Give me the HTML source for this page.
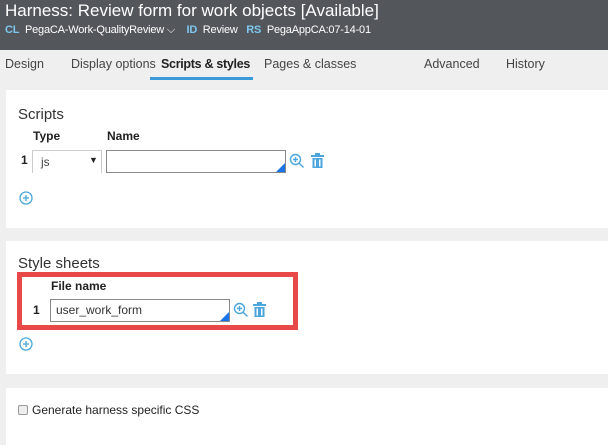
<!DOCTYPE html>
<html><head><meta charset="utf-8"><style>
*{box-sizing:border-box;margin:0;padding:0}
body{width:608px;height:445px;overflow:hidden;background:#efefef;font-family:"Liberation Sans",sans-serif;color:#222;position:relative}
.a{position:absolute;white-space:nowrap}
.hdr{position:absolute;left:0;top:0;width:608px;height:50px;background:#53565b}
.panel{position:absolute;left:6px;width:602px;background:#fff}
.inp{position:absolute;border:1px solid #8a8a8a;background:#fff;height:23px}
.inp:after{content:"";position:absolute;right:0;bottom:0;border-left:9px solid transparent;border-bottom:9px solid #1a73e8}
.t{font-size:12.5px;color:#444;top:57px}
</style></head><body>
<div class="hdr"></div>
<div class="a" style="left:5px;top:1px;font-size:17px;color:#fff">Harness: Review form for work objects [Available]</div>
<div class="a" style="left:5px;top:24px;font-size:11px;color:#fff;letter-spacing:-0.2px"><b style="color:#7ec8f0">CL</b>&nbsp; PegaCA-Work-QualityReview ⌵ &nbsp;&nbsp; <b style="color:#7ec8f0">ID</b>&nbsp; Review &nbsp;&nbsp;<b style="color:#7ec8f0">RS</b>&nbsp; PegaAppCA:07-14-01</div>
<div class="a t" style="left:5px">Design</div>
<div class="a t" style="left:71px">Display options</div>
<div class="a t" style="left:161px;font-weight:bold;color:#222;letter-spacing:-0.3px">Scripts &amp; styles</div>
<div class="a" style="left:150px;top:77px;width:103px;height:3px;background:#3a9ad9"></div>
<div class="a t" style="left:264px">Pages &amp; classes</div>
<div class="a t" style="left:424px">Advanced</div>
<div class="a t" style="left:506px">History</div>

<div class="panel" style="top:90px;height:138px"></div>
<div class="a" style="left:18px;top:106px;font-size:15px;color:#333">Scripts</div>
<div class="a" style="left:33px;top:129px;font-size:12px;font-weight:bold">Type</div>
<div class="a" style="left:107px;top:129px;font-size:12px;font-weight:bold">Name</div>
<div class="a" style="left:21px;top:153px;font-size:12px;font-weight:bold">1</div>
<div class="a" style="left:32px;top:150px;width:70px;height:23px;border:1px solid #ccc;border-bottom:none;background:#fff"></div>
<div class="a" style="left:41px;top:155px;font-size:12px;color:#444">js</div>
<div class="a" style="left:89px;top:155px;font-size:9px">▼</div>
<div class="inp" style="left:106px;top:150px;width:180px"></div>
<svg class="a" style="left:289px;top:153px" width="16" height="16" viewBox="0 0 16 16" fill="none" stroke="#4aa6dc" stroke-width="1.4"><circle cx="6.5" cy="6.5" r="5"/><path d="M4 6.5h5M6.5 4v5M10.2 10.2l4.3 4.3"/></svg>
<svg class="a" style="left:311px;top:153px" width="13" height="15" viewBox="0 0 13 15" fill="#4aa6dc"><rect x="0" y="2" width="13" height="2"/><rect x="4" y="0" width="5" height="2"/><path d="M1.5 5h10v10h-10z M3.5 6.5v7h1.5v-7z M8 6.5v7h1.5v-7z" fill-rule="evenodd"/></svg>
<svg class="a" style="left:19px;top:191px" width="14" height="14" viewBox="0 0 14 14" fill="none" stroke="#4aa6dc" stroke-width="1.3"><circle cx="7" cy="7" r="6"/><path d="M4 7h6M7 4v6"/></svg>

<div class="panel" style="top:241px;height:133px"></div>
<div class="a" style="left:18px;top:255px;font-size:15px;color:#333">Style sheets</div>
<div class="a" style="left:17px;top:272px;width:281px;height:58px;border:5px solid #e84848"></div>
<div class="a" style="left:51px;top:279px;font-size:12px;font-weight:bold">File name</div>
<div class="a" style="left:33px;top:303px;font-size:12px;font-weight:bold">1</div>
<div class="inp" style="left:50px;top:299px;width:180px"></div>
<div class="a" style="left:56px;top:303px;font-size:12px;color:#333">user_work_form</div>
<svg class="a" style="left:233px;top:302px" width="16" height="16" viewBox="0 0 16 16" fill="none" stroke="#4aa6dc" stroke-width="1.4"><circle cx="6.5" cy="6.5" r="5"/><path d="M4 6.5h5M6.5 4v5M10.2 10.2l4.3 4.3"/></svg>
<svg class="a" style="left:253px;top:302px" width="13" height="15" viewBox="0 0 13 15" fill="#4aa6dc"><rect x="0" y="2" width="13" height="2"/><rect x="4" y="0" width="5" height="2"/><path d="M1.5 5h10v10h-10z M3.5 6.5v7h1.5v-7z M8 6.5v7h1.5v-7z" fill-rule="evenodd"/></svg>
<svg class="a" style="left:19px;top:337px" width="14" height="14" viewBox="0 0 14 14" fill="none" stroke="#4aa6dc" stroke-width="1.3"><circle cx="7" cy="7" r="6"/><path d="M4 7h6M7 4v6"/></svg>

<div class="panel" style="top:388px;height:57px"></div>
<div class="a" style="left:18px;top:405px;width:10px;height:10px;border:1px solid #999;border-radius:2px;background:#eee"></div>
<div class="a" style="left:32px;top:403px;font-size:12px;color:#222">Generate harness specific CSS</div>
</body></html>
